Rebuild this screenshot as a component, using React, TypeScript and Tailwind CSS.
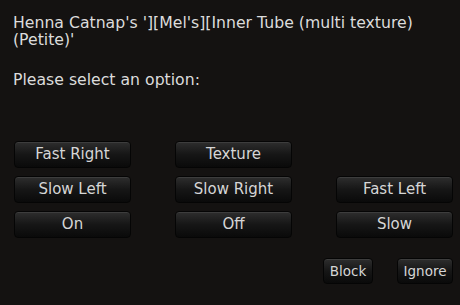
import React from "react";

function Btn({ label, className = "" }: { label: string; className?: string }) {
  return (
    <div
      className={
        "flex items-center justify-center rounded-[4px] border border-[#050505] bg-gradient-to-b from-[#2e2e2e] via-[#161616] to-[#0a0a0a] text-[#d6d6d6] shadow-[inset_0_1px_0_rgba(255,255,255,0.08)] " +
        className
      }
    >
      {label}
    </div>
  );
}

export default function App() {
  const rows: (string | null)[][] = [
    ["Fast Right", "Texture", null],
    ["Slow Left", "Slow Right", "Fast Left"],
    ["On", "Off", "Slow"],
  ];
  return (
    <div
      className="w-[460px] h-[305px] bg-[#141211] text-[#dcdcdc] flex flex-col overflow-hidden"
      style={{ fontFamily: '"DejaVu Sans", sans-serif' }}
    >
      <div className="px-[13px] pt-[14px] text-[15.7px] leading-[17px]">
        Henna Catnap's '][Mel's][Inner Tube (multi texture) (Petite)'
      </div>
      <div className="px-[13px] mt-[23px] text-[15.7px] leading-[17px]">Please select an option:</div>
      <div className="mt-[53px] ml-[14px] grid grid-cols-[117px_117px_117px] gap-x-[44px] gap-y-[8px]">
        {rows.flat().map((l, i) =>
          l ? <Btn key={i} label={l} className="h-[27px] text-[15px]" /> : <div key={i} />
        )}
      </div>
      <div className="mt-[20px] mr-[7px] flex justify-end gap-[24px]">
        <Btn label="Block" className="w-[50px] h-[26px] text-[13.5px]" />
        <Btn label="Ignore" className="w-[56px] h-[26px] text-[13.5px]" />
      </div>
    </div>
  );
}
